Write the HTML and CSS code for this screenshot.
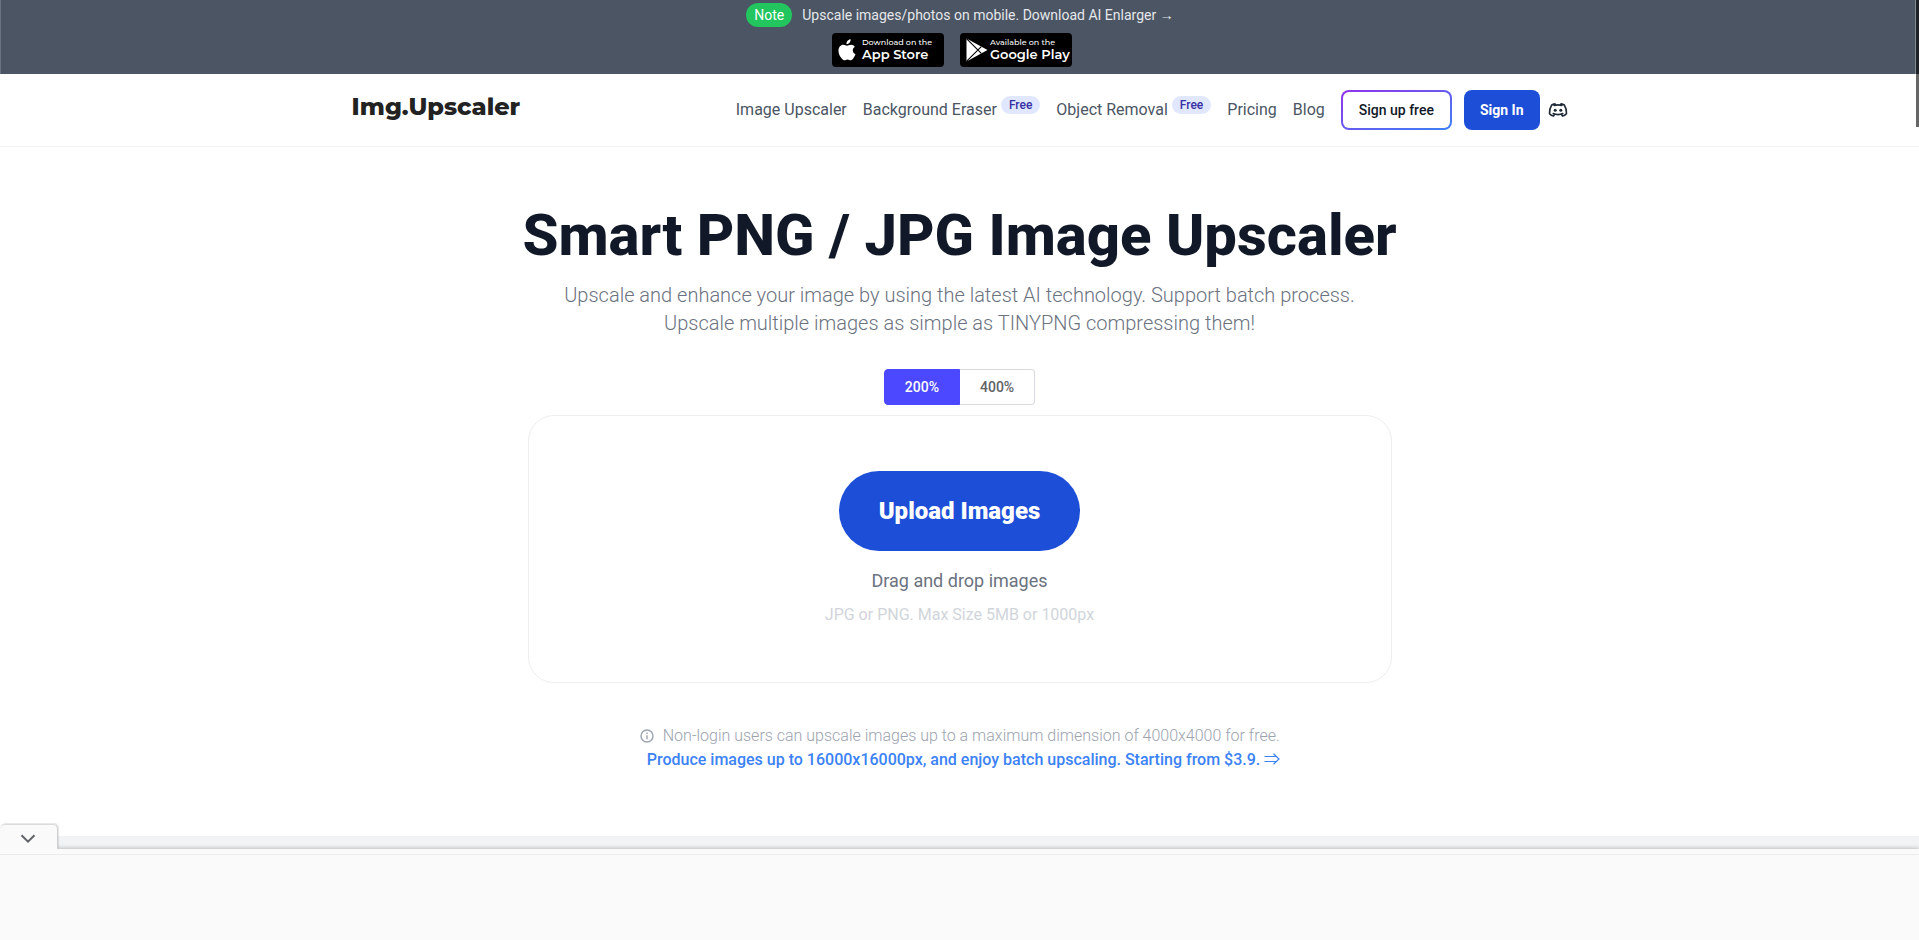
FILE: index.html
```html
<!DOCTYPE html>
<html lang="en">
<head>
<meta charset="utf-8">
<meta name="viewport" content="width=device-width, initial-scale=1">
<title>Img.Upscaler</title>
<link rel="stylesheet" href="styles.css">
</head>
<body>
<div class="banner">
  <p class="banner-note"><span class="note-pill">Note</span><a href="#app">Upscale images/photos on mobile. Download AI Enlarger →</a></p>
  <div class="stores">
    <a class="store" href="#ios">
      <svg width="18" height="22" viewBox="0 0 18 22" fill="#fff" aria-hidden="true"><path d="M12.600 0.300c.2 1.300-.3 2.500-1.100 3.400-.8.900-1.900 1.500-3 1.400-.2-1.200.4-2.500 1.100-3.300.8-.9 2-1.500 3-1.500zM16.900 7.700c-1.300.8-2.100 1.900-2.100 3.600 0 1.900 1.100 3.300 2.700 4-.4 1.200-1 2.400-1.800 3.500-.8 1.200-1.700 2.400-3 2.400-1.300 0-1.700-.8-3.200-.8s-2 .8-3.300.8c-1.300 0-2.300-1.300-3.200-2.600C1.600 16.700.5 14.300.5 11.700c0-3.700 2.300-5.900 4.700-5.900 1.600 0 2.900.9 3.800.9.900 0 2.400-1 4.100-1 1.400 0 2.900.7 3.800 2z"/></svg>
      <span class="store-text"><span class="store-small">Download on the</span><span class="store-name">App Store</span></span>
    </a>
    <a class="store store-play" href="#android">
      <svg width="22" height="24" viewBox="0 0 22 24" aria-hidden="true"><path d="M.5.600v22.800L21.500 12z" fill="#fff"/><path d="M.5.600l14.800 14.700M.5 23.400L15.300 8.700" stroke="#000" stroke-width="1.100" fill="none"/></svg>
      <span class="store-text"><span class="store-small">Available on the</span><span class="store-name">Google Play</span></span>
    </a>
  </div>
</div>
<header class="header">
  <div class="header-inner">
    <a class="logo" href="#home">Img.Upscaler</a>
    <nav class="nav">
      <a class="nav-link" href="#upscaler">Image Upscaler</a>
      <a class="nav-link" href="#eraser">Background Eraser<span class="free">Free</span></a>
      <a class="nav-link" href="#removal">Object Removal<span class="free">Free</span></a>
      <a class="nav-link" href="#pricing">Pricing</a>
      <a class="nav-link" href="#blog">Blog</a>
      <div class="actions">
        <button class="sign-up" type="button">Sign up free</button>
        <button class="sign-in" type="button">Sign In</button>
        <a class="discord" href="#discord" aria-label="Discord">
          <svg width="20" height="20" viewBox="0 0 20 20" fill="none" stroke="#1f2937" stroke-width="1.600" stroke-linecap="round" stroke-linejoin="round"><path d="M7.600 5.100L7 3.900C5.600 4.100 4.500 4.500 3.700 5 2.100 7.500 1.300 10.500 1.500 13.700c1.100 1.200 2.500 2 4 2.400l1.200-2M12.400 5.100L13 3.900c1.400.2 2.500.6 3.300 1.100 1.600 2.500 2.400 5.500 2.200 8.700-1.100 1.200-2.500 2-4 2.400l-1.200-2M6.200 5.400c2.400-.7 5.200-.7 7.600 0M5.200 13.600c3 1.300 6.600 1.300 9.600 0"/><circle cx="7.200" cy="10.200" r="1.500" fill="#1f2937" stroke="none"/><circle cx="12.800" cy="10.200" r="1.500" fill="#1f2937" stroke="none"/></svg>
        </a>
      </div>
    </nav>
  </div>
</header>
<main class="main">
  <h1 class="title">Smart PNG / JPG Image Upscaler</h1>
  <p class="lead">Upscale and enhance your image by using the latest AI technology. Support batch process. Upscale multiple images as simple as TINYPNG compressing them!</p>
  <div class="scale" role="group" aria-label="Scale">
    <button class="scale-option is-active" type="button">200%</button>
    <button class="scale-option" type="button">400%</button>
  </div>
  <section class="drop">
    <button class="upload" type="button">Upload Images</button>
    <p class="drop-hint">Drag and drop images</p>
    <p class="drop-limit">JPG or PNG. Max Size 5MB or 1000px</p>
  </section>
  <div class="info">
    <p class="info-text"><svg width="16" height="16" viewBox="0 0 16 16" fill="none" stroke="#9ca3af" stroke-width="1.400" aria-hidden="true"><circle cx="8" cy="8" r="6"/><path d="M8 7.200V11.300M8 4.600V6"/></svg>Non-login users can upscale images up to a maximum dimension of 4000x4000 for free.</p>
    <a class="info-link" href="#pricing">Produce images up to 16000x16000px, and enjoy batch upscaling. Starting from $3.9. <svg width="16" height="12" viewBox="0 0 16 12" fill="none" stroke="currentColor" stroke-width="1.200" aria-hidden="true"><path d="M.5 3.500H12M.5 8.500H12M9.500.700L15 6l-5.500 5.300"/></svg></a>
  </div>
</main>
<div class="band"></div>
<aside class="dock">
  <button class="dock-tab" type="button" aria-label="Collapse"><svg width="16" height="10" viewBox="0 0 16 10" fill="none" stroke="#5f6368" stroke-width="2"><path d="M1.500 1.200L8 7.700l6.500-6.500"/></svg></button>
  <div class="dock-edge"></div>
</aside>
<div class="scroll-thumb"></div>
</body>
</html>
```
FILE: styles.css
```css
* { box-sizing: border-box; }
body {
  margin: 0;
  min-height: 100vh;
  overflow: hidden;
  background: #fff;
  color: #111827;
  font-family: Roboto, "Liberation Sans", sans-serif;
  font-size: 16px;
  line-height: 24px;
}
p, h1 { margin: 0; }
a { color: inherit; text-decoration: none; }
button { font-family: inherit; border: 0; padding: 0; cursor: pointer; }
svg { flex: none; }

.banner {
  display: flex;
  flex-direction: column;
  align-items: center;
  gap: 6px;
  padding: 3px 0 7px;
  border-left: 1px solid #6b7280;
  background: #4b5563;
  color: #e5e7eb;
}
.banner-note {
  display: flex;
  align-items: center;
  gap: 10px;
  font-size: 14px;
}
.note-pill {
  padding: 0 8px;
  border-radius: 12px;
  background: #22c55e;
  color: #fff;
}
.stores { display: flex; }
.store {
  display: flex;
  align-items: center;
  gap: 6px;
  width: 112px;
  height: 34px;
  margin-right: 16px;
  padding-left: 6px;
  border-radius: 4px;
  background: #000;
  color: #fff;
  font-family: Montserrat, Inter, sans-serif;
}
.store-play { gap: 2px; }
.store-text {
  display: flex;
  flex-direction: column;
  padding-bottom: 2px;
  white-space: nowrap;
}
.store-small { font-size: 8px; line-height: 10px; font-weight: 500; }
.store-name { font-size: 13px; line-height: 14px; font-weight: 600; }

.header { border-bottom: 1px solid #f3f4f6; }
.header-inner {
  display: flex;
  align-items: center;
  justify-content: space-between;
  max-width: 1280px;
  margin: 0 auto;
  padding: 16px 32px;
}
.logo {
  padding-bottom: 6px;
  color: #222;
  font-family: Montserrat, Lato, sans-serif;
  font-size: 24px;
  font-weight: 800;
}
.nav { display: flex; align-items: center; gap: 16px; color: #4b5563; }
.nav-link { display: flex; align-items: center; gap: 4px; }
.free {
  margin-bottom: 10px;
  padding: 1px 8px;
  border-radius: 9px;
  background: #e0e7ff;
  color: #3730a3;
  font-size: 12px;
  line-height: 16px;
  font-weight: 500;
}
.actions { display: flex; align-items: center; gap: 12px; }
.sign-up, .sign-in {
  height: 40px;
  padding: 0 16px;
  border-radius: 8px;
  font-size: 14px;
  line-height: 20px;
}
.sign-up {
  border: 2px solid transparent;
  background: linear-gradient(#fff, #fff) padding-box, linear-gradient(to bottom right, #9333ea, #3b82f6) border-box;
  color: #111827;
  font-weight: 500;
}
.sign-in { background: #1d4ed8; color: #fff; font-weight: 700; }
.discord { display: flex; margin-left: -4px; }

.main {
  display: flex;
  flex-direction: column;
  align-items: center;
  max-width: 896px;
  margin: 0 auto;
  padding: 58px 16px 64px;
  text-align: center;
}
.title {
  font-size: 58px;
  line-height: 60px;
  font-weight: 800;
  white-space: nowrap;
}
.lead {
  max-width: 800px;
  margin-top: 16px;
  color: #6b7280;
  font-size: 20px;
  line-height: 28px;
  font-weight: 300;
}
.scale { display: flex; margin-top: 32px; }
.scale-option {
  height: 36px;
  padding: 0 20px;
  border: 1px solid #d9d9e3;
  border-left: 0;
  border-radius: 0 4px 4px 0;
  background: #fff;
  color: #606266;
  font-size: 14px;
  font-weight: 500;
}
.scale-option.is-active {
  border: 1px solid #4b48ff;
  border-radius: 4px 0 0 4px;
  background: #4b48ff;
  color: #fff;
}
.drop {
  display: flex;
  flex-direction: column;
  align-items: center;
  width: 100%;
  margin-top: 10px;
  padding: 55px 16px;
  border: 1px solid #eeeeef;
  border-radius: 26px;
}
.upload {
  height: 80px;
  padding: 0 40px;
  border-radius: 40px;
  background: #1d4ed8;
  color: #fff;
  font-size: 24px;
  font-weight: 900;
}
.drop-hint { margin-top: 16px; color: #6b7280; font-size: 18px; line-height: 28px; }
.drop-limit { margin-top: 8px; color: #d1d5db; }
.info { margin-top: 41px; }
.info-text {
  display: flex;
  align-items: center;
  gap: 8px;
  color: #9ca3af;
  font-weight: 300;
}
.info-link { padding-left: 8px; color: #3b82f6; font-weight: 500; }

.band { height: 106px; background: #f1f3f4; }
.dock {
  position: fixed;
  right: 0;
  bottom: 0;
  left: 0;
  height: 91px;
  background: #fafafa;
  box-shadow: 0 -1px 4px rgba(0, 0, 0, .22);
}
.dock-tab {
  position: absolute;
  bottom: 100%;
  left: 0;
  display: flex;
  justify-content: center;
  width: 58px;
  height: 25px;
  padding: 9px 2px 0 0;
  border-top: 1px solid #dcdcdc;
  border-right: 1px solid #d0d0d0;
  border-radius: 5px 5px 0 0;
  background: #fafafa;
  box-shadow: 1px -1px 1px rgba(0, 0, 0, .1);
}
.dock-edge { height: 6px; border-bottom: 1px solid #ececec; }
.scroll-thumb {
  position: fixed;
  top: 0;
  right: 0;
  width: 4px;
  height: 127px;
  border-left: 1px solid rgba(255, 255, 255, .3);
  background: rgba(0, 0, 0, .6);
  background-clip: padding-box;
}
```
